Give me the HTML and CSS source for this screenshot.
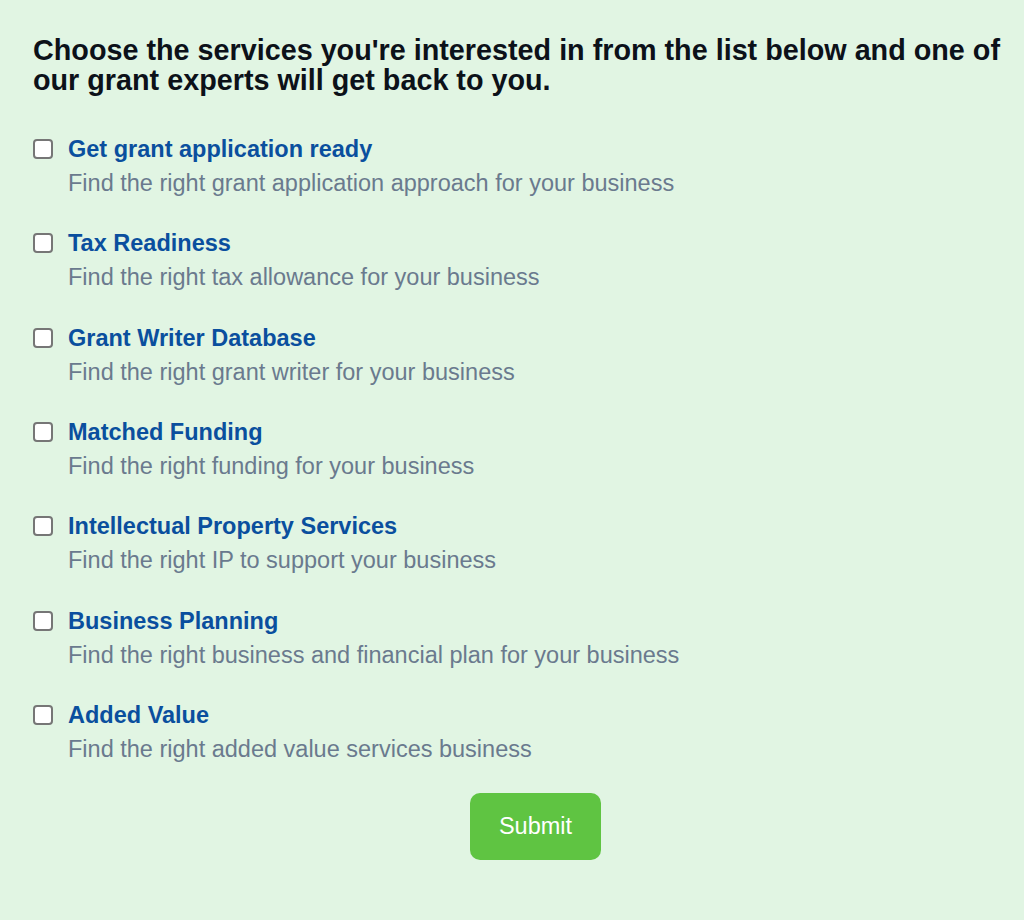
FILE: index.html
```html
<!DOCTYPE html>
<html lang="en">
<head>
    <meta charset="UTF-8">
    <meta name="viewport" content="width=device-width, initial-scale=1.0">
    <title>Grant Services</title>
    <link rel="stylesheet" href="styles.css">
</head>
<body>
    <form class="services">
        <h2 class="services-title">Choose the services you're interested in from the list below and one of our grant experts will get back to you.</h2>

        <ul class="service-list">
            <li class="service">
                <input type="checkbox" id="s1" class="service-check">
                <label for="s1" class="service-text">
                    <span class="service-name">Get grant application ready</span>
                    <span class="service-desc">Find the right grant application approach for your business</span>
                </label>
            </li>
            <li class="service">
                <input type="checkbox" id="s2" class="service-check">
                <label for="s2" class="service-text">
                    <span class="service-name">Tax Readiness</span>
                    <span class="service-desc">Find the right tax allowance for your business</span>
                </label>
            </li>
            <li class="service">
                <input type="checkbox" id="s3" class="service-check">
                <label for="s3" class="service-text">
                    <span class="service-name">Grant Writer Database</span>
                    <span class="service-desc">Find the right grant writer for your business</span>
                </label>
            </li>
            <li class="service">
                <input type="checkbox" id="s4" class="service-check">
                <label for="s4" class="service-text">
                    <span class="service-name">Matched Funding</span>
                    <span class="service-desc">Find the right funding for your business</span>
                </label>
            </li>
            <li class="service">
                <input type="checkbox" id="s5" class="service-check">
                <label for="s5" class="service-text">
                    <span class="service-name">Intellectual Property Services</span>
                    <span class="service-desc">Find the right IP to support your business</span>
                </label>
            </li>
            <li class="service">
                <input type="checkbox" id="s6" class="service-check">
                <label for="s6" class="service-text">
                    <span class="service-name">Business Planning</span>
                    <span class="service-desc">Find the right business and financial plan for your business</span>
                </label>
            </li>
            <li class="service">
                <input type="checkbox" id="s7" class="service-check">
                <label for="s7" class="service-text">
                    <span class="service-name">Added Value</span>
                    <span class="service-desc">Find the right added value services business</span>
                </label>
            </li>
        </ul>

        <div class="actions">
            <button type="button" class="submit-btn">Submit</button>
        </div>
    </form>
</body>
</html>
```

FILE: styles.css
```css
body {
    margin: 0;
    min-height: 100vh;
    background-color: #e1f5e3;
    font-family: "Liberation Sans", Arial, sans-serif;
}
.services {
    padding: 35px 10px 40px 33px;
}
.services-title {
    margin: 0 0 40px;
    font-size: 28.75px;
    line-height: 30px;
    font-weight: bold;
    color: #0c1119;
}
.service-list {
    list-style: none;
    margin: 0;
    padding: 0;
    display: flex;
    flex-direction: column;
    gap: 32.33px;
}
.service {
    display: flex;
    align-items: flex-start;
    gap: 15px;
}
.service-check {
    appearance: none;
    -webkit-appearance: none;
    width: 20px;
    height: 20px;
    margin: 4px 0 0;
    flex-shrink: 0;
    background: #fff;
    border: 2px solid #767676;
    border-radius: 4px;
    box-sizing: border-box;
    cursor: pointer;
}
.service-check:checked {
    background: #0a4f9e;
    border-color: #0a4f9e;
}
.service-text {
    display: flex;
    flex-direction: column;
    gap: 6px;
    cursor: pointer;
}
.service-name {
    font-size: 23.5px;
    line-height: 28px;
    font-weight: bold;
    color: #0a4f9e;
}
.service-desc {
    font-size: 23.5px;
    line-height: 28px;
    color: #6a7a8e;
}
.actions {
    display: flex;
    justify-content: center;
    margin-top: 30px;
    padding-left: 24px;
}
.submit-btn {
    width: 131px;
    height: 67px;
    border: none;
    border-radius: 10px;
    background-color: #5fc442;
    color: #fff;
    font-family: inherit;
    font-size: 23.5px;
    cursor: pointer;
}
```
